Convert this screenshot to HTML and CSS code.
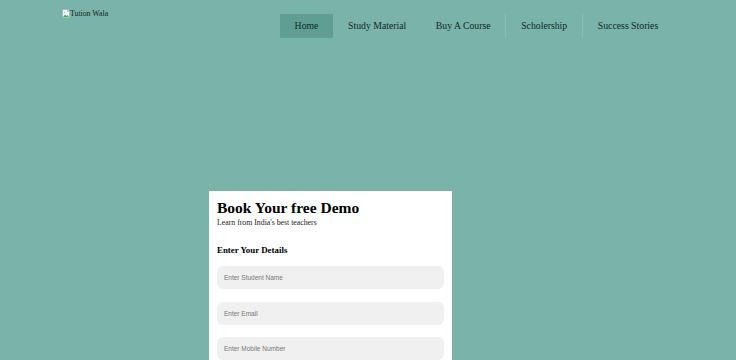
FILE: index.html
```html
<!DOCTYPE html>
<html lang="en">
<head>
<meta charset="utf-8">
<title>Tution Wala</title>
<link rel="stylesheet" href="styles.css">
</head>
<body>
<header class="header">
  <a class="logo" href="#">
    <svg class="logo-icon" width="8" height="9" viewBox="0 0 16 18" aria-hidden="true">
      <path d="M1 1h10l4 4v12H1z" fill="#f4f6f8" stroke="#9aa3a8" stroke-width="1"/>
      <path d="M11 1v4h4" fill="#dfe3e6" stroke="#9aa3a8" stroke-width="1"/>
      <path d="M2 16l4-5 3 3 2-2 3 4z" fill="#4caf50"/>
      <circle cx="5" cy="7" r="1.6" fill="#8ec5e8"/>
    </svg><span class="logo-text">Tution Wala</span>
  </a>
  <nav class="nav">
    <a class="nav-item active" href="#">Home</a>
    <a class="nav-item" href="#">Study Material</a>
    <a class="nav-item sep" href="#">Buy A Course</a>
    <a class="nav-item sep" href="#">Scholership</a>
    <a class="nav-item" href="#">Success Stories</a>
  </nav>
</header>
<main class="hero">
  <form class="card">
    <h1 class="card-title">Book Your free Demo</h1>
    <p class="card-sub">Learn from India's best teachers</p>
    <h3 class="card-label">Enter Your Details</h3>
    <input class="field" type="text" placeholder="Enter Student Name">
    <input class="field" type="email" placeholder="Enter Email">
    <input class="field" type="tel" placeholder="Enter Mobile Number">
  </form>
</main>
</body>
</html>
```
FILE: styles.css
```css
* { box-sizing: border-box; }
html, body { margin: 0; padding: 0; }
body {
  background: #7ab3a9;
  font-family: "Liberation Serif", "Times New Roman", serif;
  color: #111;
  height: 360px;
  overflow: hidden;
}
.header {
  display: flex;
  justify-content: space-between;
  align-items: flex-start;
  height: 38px;
  padding: 8px 63px 0 62px;
}
.logo {
  display: flex;
  align-items: center;
  text-decoration: none;
  color: #131f1d;
  font-size: 7.8px;
  padding-top: 1px;
}
.logo-icon { display: block; }
.nav {
  display: flex;
  margin-top: 6px;
}
.nav-item {
  display: block;
  height: 24px;
  line-height: 24px;
  padding: 0 14.8px;
  font-size: 9.75px;
  color: #0f2925;
  text-decoration: none;
}
.nav-item.active { background: #5f9f93; }
.nav-item.sep { border-right: 1px solid rgba(255, 255, 255, 0.13); }
.hero {
  display: flex;
  padding: 153px 0 0 209px;
}
.card {
  width: 243px;
  height: 200px;
  background: #fff;
  padding: 8px 8px 0;
}
.card-title {
  margin: 0;
  font-size: 15.5px;
  font-weight: bold;
  line-height: 18px;
  color: #000;
}
.card-sub {
  margin: 1px 0 0;
  font-size: 7.8px;
  line-height: 9px;
  color: #222;
}
.card-label {
  margin: 18px 0 0;
  font-size: 8.9px;
  line-height: 11px;
  font-weight: bold;
  color: #000;
}
.field {
  display: block;
  width: 100%;
  height: 23px;
  margin: 10px 0 0;
  border: none;
  border-radius: 6px;
  background: #f0f0f0;
  padding: 0 7px;
  font-family: "Liberation Sans", Arial, sans-serif;
  font-size: 6.5px;
  color: #333;
  outline: none;
}
.field + .field { margin-top: 12.5px; }
.field::placeholder { color: #777; }
```
